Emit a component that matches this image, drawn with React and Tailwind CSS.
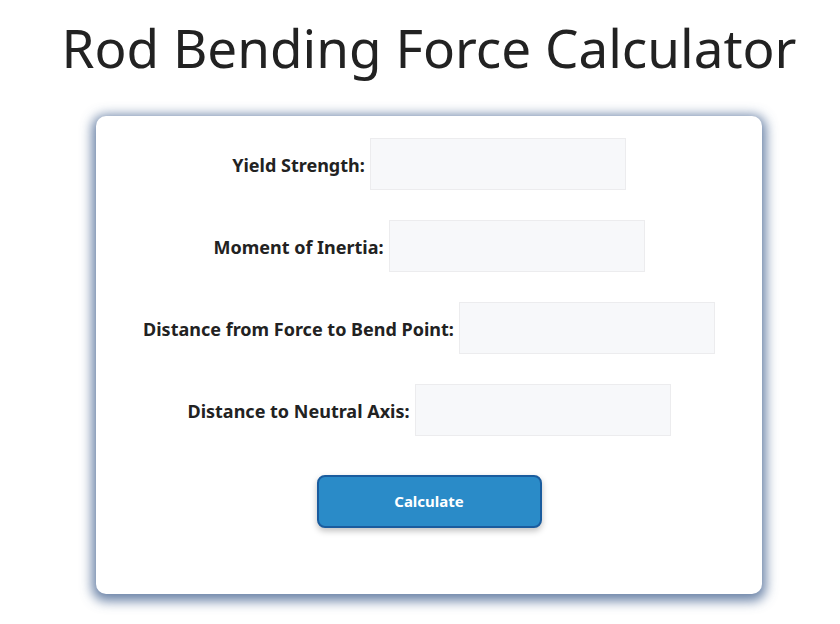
import React, { useState } from 'react';

const FIELDS = [
    { id: 'yield', label: 'Yield Strength:' },
    { id: 'inertia', label: 'Moment of Inertia:' },
    { id: 'distance', label: 'Distance from Force to Bend Point:' },
    { id: 'axis', label: 'Distance to Neutral Axis:' },
];

function App() {
    const [values, setValues] = useState({});

    const handleChange = (id, value) => {
        setValues(prev => ({ ...prev, [id]: value }));
    };

    return (
        <div className="min-h-screen bg-white font-['Noto_Sans',sans-serif] text-[#222]">
            <h1 className="pt-[14px] pl-[18px] text-center text-[53px] leading-[68px] font-normal text-[#222]">
                Rod Bending Force Calculator
            </h1>

            <div className="mt-[34px] ml-[96px] w-[666px] h-[478px] bg-white rounded-[10px] shadow-[0_3px_12px_4px_rgba(70,100,145,0.8)] pt-[22px]">
                <div className="flex flex-col items-center gap-[30px]">
                    {FIELDS.map((f) => (
                        <div key={f.id} className="flex items-center">
                            <label className="text-[18px] font-bold mr-[5px] pt-[3px]">{f.label}</label>
                            <input
                                type="text"
                                value={values[f.id] || ''}
                                onChange={(e) => handleChange(f.id, e.target.value)}
                                className="w-[256px] h-[52px] bg-[#f7f8fa] border border-[#ececee] outline-none px-2"
                            />
                        </div>
                    ))}
                </div>

                <div className="flex justify-center mt-[39px]">
                    <button className="w-[225px] h-[53px] bg-[#2a8bc8] border-2 border-[#1a5c9e] rounded-[8px] text-white text-[15px] font-bold shadow-[0_3px_6px_rgba(0,0,0,0.25)]">
                        Calculate
                    </button>
                </div>
            </div>
        </div>
    );
}

export default App;
